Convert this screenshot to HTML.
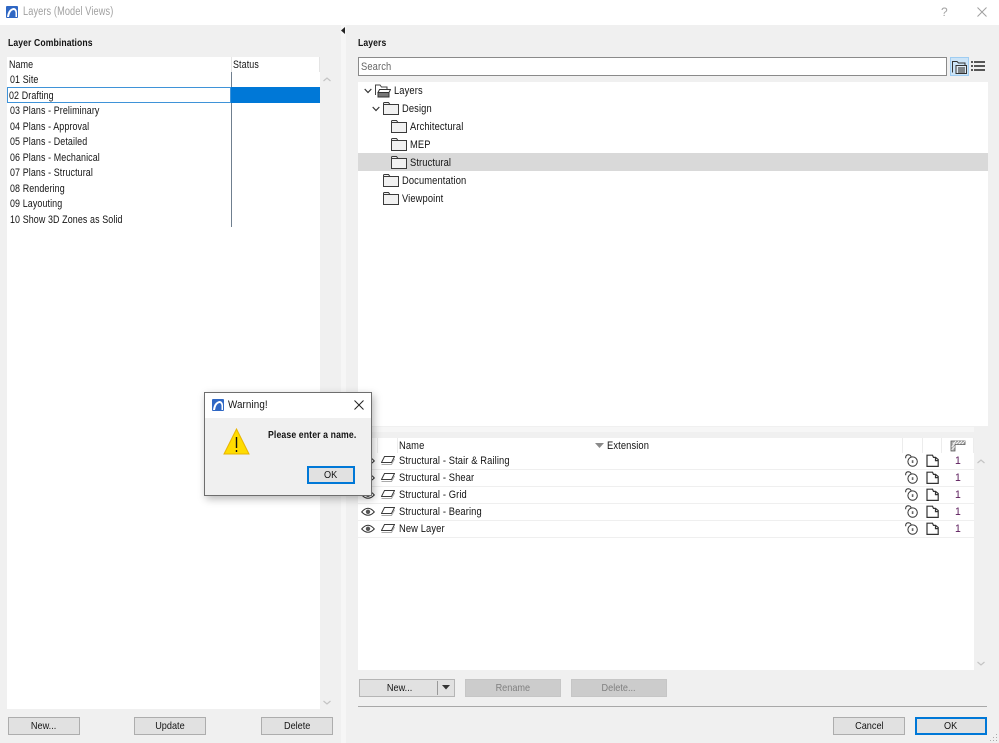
<!DOCTYPE html>
<html><head><meta charset="utf-8"><style>
html,body{margin:0;padding:0;width:999px;height:743px;overflow:hidden;background:#f0f0f0}
body{font:11px/14px "Liberation Sans",sans-serif;color:#141414;position:relative}
div,svg,span{position:absolute}
.t{white-space:nowrap;letter-spacing:.13px;transform:scaleX(.81);transform-origin:0 0}
.r{transform:scaleX(.85)}
.w{background:#fff}
.b{box-sizing:border-box;background:#e1e1e1;border:1px solid #adadad;text-align:center;height:18px;line-height:16px;width:72px;top:717px;font-size:10.5px}
.d{box-sizing:border-box;background:#cccccc;border:1px solid #c6c6c6;text-align:center;height:18px;line-height:16px;width:96px;top:679px;color:#7f7f7f;font-size:10.5px}
.b i,.d i{display:inline-block;font-style:normal;transform:scaleX(.87);transform-origin:50% 0}
.sep{left:358px;width:545px;height:1px;background:#efefef}
.sep2{left:903px;width:71px;height:1px;background:#efefef}
.n{color:#5a1a5a;transform:scaleX(.95)}
</style></head><body>
<svg width="0" height="0" style="left:0;top:0"><defs>
<symbol id="folder" viewBox="0 0 16 13"><path d="M.5 12.5V1.5Q.5.5 1.5.5H5.5L7 2.5H15.5V12.5Z" fill="#f1f1f1" stroke="#3a3a3a"/><path d="M.5 2.5H7" fill="none" stroke="#3a3a3a"/></symbol>
<symbol id="layer" viewBox="0 0 14 10"><path d="M3.5.5H13.5L10.5 6.5H.5Z" fill="#fff" stroke="#3c3c3c"/><path d="M.5 8.5H10.5L13.5 3" fill="none" stroke="#aaa"/></symbol>
<symbol id="eye" viewBox="0 0 14 10"><path d="M.7 5Q7-2.5 13.3 5Q7 11.5.7 5Z" fill="#fff" stroke="#333" stroke-width="1"/><circle cx="7" cy="4.8" r="2.2" fill="#555"/></symbol>
<symbol id="lock" viewBox="0 0 13 13"><path d="M.7 4.2V3Q1 .7 3.5.7 5.6.8 6.2 3" fill="none" stroke="#333"/><circle cx="7.6" cy="7.6" r="4.7" fill="#fff" stroke="#333"/><path d="M7.6 6.2V9" stroke="#666" stroke-width="1.6"/></symbol>
<symbol id="sheet" viewBox="0 0 13 13"><path d="M1 12.4V1.2H6.5L7.5 3.4H9.5L12.2 5.5V12.4Z" fill="#fff" stroke="#333" stroke-width="1.2"/><path d="M9.5 3.4V6.6H12.2" fill="none" stroke="#333" stroke-width="1.2"/></symbol>
<symbol id="logo" viewBox="0 0 12 12"><rect width="12" height="12" rx="1" fill="#2f67c4"/><path d="M1 11Q2 3 7.5 2 10.5 2 11 6V11H9.5V6.5Q9 4 7.5 4 4 4.5 3 11Z" fill="#fff"/></symbol>
</defs></svg>

<!-- title bar -->
<div class="w" style="left:0;top:0;width:999px;height:25px"></div>
<svg style="left:6px;top:6px" width="12" height="12"><use href="#logo"/></svg>
<div class="t" style="left:23px;top:5px;color:#a0a0a0;font-size:11.5px;transform:scaleX(.8)">Layers (Model Views)</div>
<div style="left:941px;top:5px;color:#a3a3a3;font-size:12px">?</div>
<svg style="left:977px;top:7px" width="10" height="10"><path d="M.5.5L9.5 9.5M9.5.5L.5 9.5" stroke="#a0a0a0"/></svg>

<!-- splitter -->
<div style="left:341px;top:25px;width:5px;height:718px;background:#f6f6f6"></div>
<svg style="left:341px;top:27px" width="5" height="8"><path d="M4 0V7L0 3.5Z" fill="#222"/></svg>

<!-- left panel -->
<div class="t" style="left:8px;top:36px;font-weight:bold;font-size:10.5px;transform:scaleX(.82)">Layer Combinations</div>
<div class="w" style="left:7px;top:57px;width:313px;height:652px"></div>
<div style="left:231px;top:57px;width:1px;height:15px;background:#e4e4e4"></div>
<div style="left:319px;top:57px;width:1px;height:15px;background:#e4e4e4"></div>
<div class="t" style="left:9px;top:57.5px">Name</div>
<div class="t" style="left:233px;top:57.5px">Status</div>
<div style="left:231px;top:72px;width:1px;height:155px;background:#6f7f8f"></div>
<div style="left:231px;top:87px;width:89px;height:16px;background:#0078d7"></div>
<div style="left:7px;top:87px;width:224px;height:16px;box-sizing:border-box;border:1px solid #3f93d8;background:#fff"></div>
<div class="t" style="left:10px;top:73px">01 Site</div>
<div class="t" style="left:9px;top:88.5px">02 Drafting</div>
<div class="t" style="left:10px;top:104px">03 Plans - Preliminary</div>
<div class="t" style="left:10px;top:119.5px">04 Plans - Approval</div>
<div class="t" style="left:10px;top:135px">05 Plans - Detailed</div>
<div class="t" style="left:10px;top:150.5px">06 Plans - Mechanical</div>
<div class="t" style="left:10px;top:166px">07 Plans - Structural</div>
<div class="t" style="left:10px;top:181.5px">08 Rendering</div>
<div class="t" style="left:10px;top:197px">09 Layouting</div>
<div class="t" style="left:10px;top:212.5px">10 Show 3D Zones as Solid</div>
<svg style="left:323px;top:77px" width="8" height="5"><path d="M.5 4L4 1 7.5 4" fill="none" stroke="#c4c4c4" stroke-width="1.2"/></svg>
<svg style="left:323px;top:700px" width="8" height="5"><path d="M.5 1L4 4 7.5 1" fill="none" stroke="#c4c4c4" stroke-width="1.2"/></svg>
<div class="b" style="left:8px"><i>New...</i></div>
<div class="b" style="left:134px"><i>Update</i></div>
<div class="b" style="left:261px"><i>Delete</i></div>

<!-- right panel -->
<div class="t" style="left:358px;top:36px;font-weight:bold;font-size:10.5px;transform:scaleX(.82)">Layers</div>
<div class="w" style="left:358px;top:57px;width:589px;height:19px;box-sizing:border-box;border:1px solid #8a8a8a"></div>
<div class="t r" style="left:361px;top:60px;color:#666">Search</div>
<div style="left:950px;top:57px;width:19px;height:19px;box-sizing:border-box;background:#cce4f7;border:1px solid #9fcdf2"></div>
<svg style="left:952px;top:60px" width="15" height="14"><path d="M.5 12.5V1.5H5L6.5 3H13V5" fill="none" stroke="#333"/><path d="M4 5.5H14.5V13.5H4Z" fill="#dfeaf3" stroke="#333"/><path d="M6 8H13M6 10H13M6 12H13" stroke="#222"/></svg>
<svg style="left:971px;top:61px" width="14" height="10"><path d="M0 1H2M3 1H14M0 5H2M3 5H14M0 9H2M3 9H14" stroke="#222" stroke-width="1.4"/></svg>

<div class="w" style="left:358px;top:82px;width:630px;height:344px"></div>
<div style="left:358px;top:153px;width:630px;height:18px;background:#d9d9d9"></div>
<svg style="left:364px;top:88px" width="8" height="6"><path d="M.7 1L4 4.5 7.3 1" fill="none" stroke="#333" stroke-width="1.2"/></svg>
<svg style="left:375px;top:84px" width="16" height="14"><path d="M.5 11V1H5L6.5 3H12V5" fill="#fff" stroke="#444"/><path d="M4.5 5.5H15.5L14 8.5H3Z" fill="#fff" stroke="#333"/><path d="M3 8.5H14V13H3Z" fill="#777" stroke="#333"/></svg>
<div class="t r" style="left:394px;top:84px">Layers</div>
<svg style="left:372px;top:106px" width="8" height="6"><path d="M.7 1L4 4.5 7.3 1" fill="none" stroke="#333" stroke-width="1.2"/></svg>
<svg style="left:383px;top:102px" width="16" height="13"><use href="#folder"/></svg>
<div class="t r" style="left:402px;top:102px">Design</div>
<svg style="left:391px;top:120px" width="16" height="13"><use href="#folder"/></svg>
<div class="t r" style="left:410px;top:120px">Architectural</div>
<svg style="left:391px;top:138px" width="16" height="13"><use href="#folder"/></svg>
<div class="t r" style="left:410px;top:138px">MEP</div>
<svg style="left:391px;top:156px" width="16" height="13"><use href="#folder"/></svg>
<div class="t r" style="left:410px;top:155.5px">Structural</div>
<svg style="left:383px;top:174px" width="16" height="13"><use href="#folder"/></svg>
<div class="t r" style="left:402px;top:173.5px">Documentation</div>
<svg style="left:383px;top:192px" width="16" height="13"><use href="#folder"/></svg>
<div class="t r" style="left:402px;top:191.5px">Viewpoint</div>

<div style="left:358px;top:427px;width:616px;height:5px;background:#f6f6f6"></div>

<!-- layer table -->
<div class="w" style="left:358px;top:438px;width:616px;height:232px"></div>
<div style="left:377px;top:438px;width:1px;height:15px;background:#ececec"></div>
<div style="left:397px;top:438px;width:1px;height:15px;background:#ececec"></div>
<div style="left:902px;top:438px;width:1px;height:15px;background:#ececec"></div>
<div style="left:922px;top:438px;width:1px;height:15px;background:#ececec"></div>
<div style="left:941px;top:438px;width:1px;height:15px;background:#ececec"></div>
<div style="left:973px;top:438px;width:1px;height:15px;background:#ececec"></div>
<div class="t r" style="left:399px;top:438.5px">Name</div>
<svg style="left:595px;top:443px" width="9" height="5"><path d="M0 0H9L4.5 5Z" fill="#8a8a8a"/></svg>
<div class="t r" style="left:607px;top:438.5px">Extension</div>
<svg style="left:950px;top:440px" width="16" height="12"><path d="M1 1H15V4.5H5V11H1Z" fill="#b5b5b5" stroke="#555" stroke-width=".8"/><path d="M3 4L6 1M6 4L9 1M9 4L12 1M12 4L15 1M1.5 7L5 3.5M1.5 10L5 6.5" stroke="#fff" stroke-width=".8"/></svg>

<div class="sep" style="top:469px"></div><div class="sep2" style="top:469px"></div>
<div class="sep" style="top:486px"></div><div class="sep2" style="top:486px"></div>
<div class="sep" style="top:503px"></div><div class="sep2" style="top:503px"></div>
<div class="sep" style="top:520px"></div><div class="sep2" style="top:520px"></div>
<div class="sep" style="top:537px"></div><div class="sep2" style="top:537px"></div>

<svg style="left:361px;top:456px" width="14" height="10"><use href="#eye"/></svg>
<svg style="left:361px;top:473px" width="14" height="10"><use href="#eye"/></svg>
<svg style="left:361px;top:490px" width="14" height="10"><use href="#eye"/></svg>
<svg style="left:361px;top:507px" width="14" height="10"><use href="#eye"/></svg>
<svg style="left:361px;top:524px" width="14" height="10"><use href="#eye"/></svg>

<svg style="left:381px;top:456px" width="14" height="10"><use href="#layer"/></svg>
<svg style="left:381px;top:473px" width="14" height="10"><use href="#layer"/></svg>
<svg style="left:381px;top:490px" width="14" height="10"><use href="#layer"/></svg>
<svg style="left:381px;top:507px" width="14" height="10"><use href="#layer"/></svg>
<svg style="left:381px;top:524px" width="14" height="10"><use href="#layer"/></svg>

<div class="t r" style="left:399px;top:454px">Structural - Stair &amp; Railing</div>
<div class="t r" style="left:399px;top:471px">Structural - Shear</div>
<div class="t r" style="left:399px;top:488px">Structural - Grid</div>
<div class="t r" style="left:399px;top:505px">Structural - Bearing</div>
<div class="t r" style="left:399px;top:522px">New Layer</div>

<svg style="left:905px;top:454px" width="13" height="13"><use href="#lock"/></svg>
<svg style="left:905px;top:471px" width="13" height="13"><use href="#lock"/></svg>
<svg style="left:905px;top:488px" width="13" height="13"><use href="#lock"/></svg>
<svg style="left:905px;top:505px" width="13" height="13"><use href="#lock"/></svg>
<svg style="left:905px;top:522px" width="13" height="13"><use href="#lock"/></svg>

<svg style="left:926px;top:454px" width="13" height="13"><use href="#sheet"/></svg>
<svg style="left:926px;top:471px" width="13" height="13"><use href="#sheet"/></svg>
<svg style="left:926px;top:488px" width="13" height="13"><use href="#sheet"/></svg>
<svg style="left:926px;top:505px" width="13" height="13"><use href="#sheet"/></svg>
<svg style="left:926px;top:522px" width="13" height="13"><use href="#sheet"/></svg>

<div class="t n" style="left:955px;top:454px">1</div>
<div class="t n" style="left:955px;top:471px">1</div>
<div class="t n" style="left:955px;top:488px">1</div>
<div class="t n" style="left:955px;top:505px">1</div>
<div class="t n" style="left:955px;top:522px">1</div>

<svg style="left:977px;top:459px" width="8" height="5"><path d="M.5 4L4 1 7.5 4" fill="none" stroke="#c4c4c4" stroke-width="1.2"/></svg>
<svg style="left:977px;top:661px" width="8" height="5"><path d="M.5 1L4 4 7.5 1" fill="none" stroke="#c4c4c4" stroke-width="1.2"/></svg>

<!-- lower buttons -->
<div class="b" style="left:359px;top:679px;width:96px;text-align:left;padding-left:25px;border-color:#b5b5b5"><i>New...</i></div>
<div style="left:437px;top:681px;width:1px;height:14px;background:#999"></div>
<svg style="left:442px;top:685px" width="8" height="5"><path d="M0 0H8L4 4.5Z" fill="#333"/></svg>
<div class="d" style="left:465px"><i>Rename</i></div>
<div class="d" style="left:571px"><i>Delete...</i></div>
<div style="left:358px;top:706px;width:629px;height:1px;background:#a8a8a8"></div>
<div class="b" style="left:833px"><i>Cancel</i></div>
<div class="b" style="left:915px;border:2px solid #0078d7;line-height:14px"><i>OK</i></div>
<svg style="left:990px;top:733px" width="8" height="8"><path d="M6 1h1v1H6zM3 4h1v1H3zM6 4h1v1H6zM0 7h1v1H0zM3 7h1v1H3zM6 7h1v1H6z" fill="#aaa"/></svg>

<!-- warning dialog -->
<div style="left:204px;top:392px;width:168px;height:104px;box-sizing:border-box;background:#f0f0f0;border:1px solid #6e6e6e;box-shadow:2px 3px 8px rgba(0,0,0,.28)"></div>
<div class="w" style="left:205px;top:393px;width:166px;height:25px"></div>
<svg style="left:212px;top:399px" width="12" height="12"><use href="#logo"/></svg>
<div class="t" style="left:228px;top:398px;font-size:11px;transform:scaleX(.89)">Warning!</div>
<svg style="left:354px;top:400px" width="10" height="10"><path d="M.5.5L9.5 9.5M9.5.5L.5 9.5" stroke="#222"/></svg>
<svg style="left:223px;top:428px" width="27" height="27"><path d="M13.5 1L26 26H1Z" fill="#ffdc00" stroke="#e8b400"/><path d="M13.5 9V20M13.5 22V24" stroke="#111" stroke-width="1.4"/></svg>
<div class="t" style="left:268px;top:427.5px;font-weight:bold;font-size:10.5px;transform:scaleX(.83)">Please enter a name.</div>
<div class="b" style="left:307px;top:466px;width:48px;height:18px;border:2px solid #0078d7;line-height:14px"><i>OK</i></div>
</body></html>
